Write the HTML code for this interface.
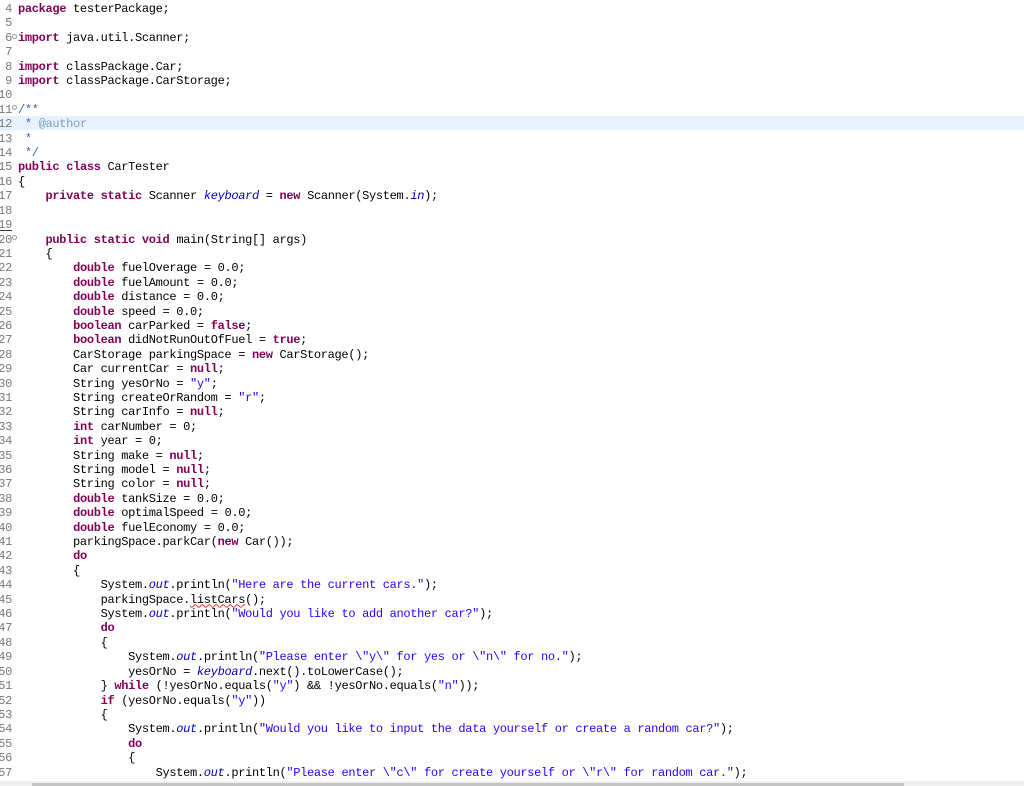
<!DOCTYPE html>
<html><head><meta charset="utf-8"><style>
html,body{margin:0;padding:0;width:1024px;height:786px;overflow:hidden;background:#fff;}
.g,.c{position:absolute;top:2px;margin:0;font-family:"Liberation Mono",monospace;font-size:12px;letter-spacing:-0.32px;line-height:14.4px;white-space:pre;}
.g{left:-4px;width:16px;text-align:right;color:#787878;}
.c{left:18px;color:#000;}
.hl{position:absolute;left:0;top:116px;width:1024px;height:14px;background:#e8f2fe;}
.k{color:#7f0055;font-weight:bold}
.s{color:#2a00ff}
.f{color:#0000c0;font-style:italic}
.cm{color:#3f5fbf}
.t{color:#7f9fbf}
.sb{position:absolute;left:0;top:781px;width:1024px;height:5px;background:#f0f0f0;}
.th{position:absolute;left:32px;top:783px;width:872px;height:3px;background:#c2c2c2;}
.sq{text-decoration:underline wavy #e33;text-decoration-thickness:1px;}
.fm{position:absolute;left:12px;width:5px;height:5px;border:1px solid #999;border-radius:50%;box-sizing:border-box;}
.u{position:absolute;left:0;top:230px;width:12px;height:1px;background:#333;}
</style></head><body>
<div class="hl"></div>
<div class="fm" style="top:34px"></div>
<div class="fm" style="top:105px"></div>
<div class="fm" style="top:235px"></div>
<div class="u"></div>
<pre class="g">4
5
6
7
8
9
10
11
12
13
14
15
16
17
18
19
20
21
22
23
24
25
26
27
28
29
30
31
32
33
34
35
36
37
38
39
40
41
42
43
44
45
46
47
48
49
50
51
52
53
54
55
56
57</pre>
<pre class="c"><span class="k">package</span> testerPackage;

<span class="k">import</span> java.util.Scanner;

<span class="k">import</span> classPackage.Car;
<span class="k">import</span> classPackage.CarStorage;

<span class="cm">/**</span>
<span class="cm"> * <span class="t">@author</span></span>
<span class="cm"> *</span>
<span class="cm"> */</span>
<span class="k">public</span> <span class="k">class</span> CarTester
{
    <span class="k">private</span> <span class="k">static</span> Scanner <span class="f">keyboard</span> = <span class="k">new</span> Scanner(System.<span class="f">in</span>);


    <span class="k">public</span> <span class="k">static</span> <span class="k">void</span> main(String[] args)
    {
        <span class="k">double</span> fuelOverage = 0.0;
        <span class="k">double</span> fuelAmount = 0.0;
        <span class="k">double</span> distance = 0.0;
        <span class="k">double</span> speed = 0.0;
        <span class="k">boolean</span> carParked = <span class="k">false</span>;
        <span class="k">boolean</span> didNotRunOutOfFuel = <span class="k">true</span>;
        CarStorage parkingSpace = <span class="k">new</span> CarStorage();
        Car currentCar = <span class="k">null</span>;
        String yesOrNo = <span class="s">"y"</span>;
        String createOrRandom = <span class="s">"r"</span>;
        String carInfo = <span class="k">null</span>;
        <span class="k">int</span> carNumber = 0;
        <span class="k">int</span> year = 0;
        String make = <span class="k">null</span>;
        String model = <span class="k">null</span>;
        String color = <span class="k">null</span>;
        <span class="k">double</span> tankSize = 0.0;
        <span class="k">double</span> optimalSpeed = 0.0;
        <span class="k">double</span> fuelEconomy = 0.0;
        parkingSpace.parkCar(<span class="k">new</span> Car());
        <span class="k">do</span>
        {
            System.<span class="f">out</span>.println(<span class="s">"Here are the current cars."</span>);
            parkingSpace.<span class="sq">listCars</span>();
            System.<span class="f">out</span>.println(<span class="s">"Would you like to add another car?"</span>);
            <span class="k">do</span>
            {
                System.<span class="f">out</span>.println(<span class="s">"Please enter \"y\" for yes or \"n\" for no."</span>);
                yesOrNo = <span class="f">keyboard</span>.next().toLowerCase();
            } <span class="k">while</span> (!yesOrNo.equals(<span class="s">"y"</span>) &amp;&amp; !yesOrNo.equals(<span class="s">"n"</span>));
            <span class="k">if</span> (yesOrNo.equals(<span class="s">"y"</span>))
            {
                System.<span class="f">out</span>.println(<span class="s">"Would you like to input the data yourself or create a random car?"</span>);
                <span class="k">do</span>
                {
                    System.<span class="f">out</span>.println(<span class="s">"Please enter \"c\" for create yourself or \"r\" for random car."</span>);</pre>
<div class="sb"></div><div class="th"></div>
</body></html>
